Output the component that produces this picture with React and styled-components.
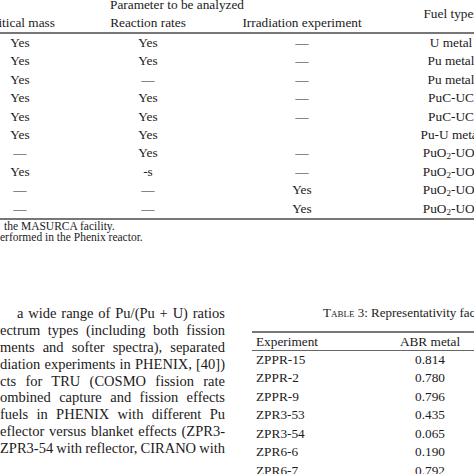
import React from 'react';
import styled, { createGlobalStyle } from 'styled-components';

const GlobalStyle = createGlobalStyle`
  html, body {
    margin: 0;
    padding: 0;
    background: #ffffff;
    overflow: hidden;
  }
  body {
    font-family: "Liberation Serif", "DejaVu Serif", serif;
    color: #1c1a1b;
  }
`;

const topCols = '128px 128px 180px 118px';
const rowH = 18.4;

const Page = styled.div`
  width: 474px;
  height: 474px;
  overflow: hidden;
  display: flex;
  flex-direction: column;
`;

const TopTable = styled.div`
  flex-shrink: 0;
  width: max-content;
  margin: -4px 0 0 -44px;
  font-size: 13.3px;
`;

const HeadGrid = styled.div`
  display: grid;
  grid-template-columns: ${topCols};
  grid-template-rows: 18px 18px;
  border-bottom: 2px solid #777;
`;

const HeadCell = styled.div`
  grid-column: ${(p) => p.$col};
  grid-row: ${(p) => p.$row};
  align-self: center;
  line-height: 18px;
  text-align: ${(p) => (p.$left ? 'left' : 'center')};
  padding-left: ${(p) => p.$pad || 0}px;
  white-space: nowrap;
`;

const Body = styled.div`
  border-bottom: 2px solid #777;
`;

const Row = styled.div`
  display: grid;
  grid-template-columns: ${topCols};
  height: ${rowH}px;
  line-height: ${rowH}px;
`;

const Cell = styled.div`
  text-align: center;
  white-space: nowrap;
`;

const Sub = styled.sub`
  font-size: 0.68em;
  line-height: 0;
  vertical-align: -0.25em;
`;

const Notes = styled.div`
  margin-top: 1px;
  font-size: 11.5px;
  line-height: 11.2px;
`;

const NoteLine = styled.div`
  padding-left: ${(p) => p.$pad || 0}px;
  white-space: nowrap;
`;

const Bottom = styled.div`
  display: flex;
  align-items: flex-start;
  margin-top: 62px;
`;

const Paragraph = styled.div`
  flex-shrink: 0;
  width: 225px;
  font-size: 14.5px;
  line-height: 16.8px;
`;

const ParaLine = styled.div`
  padding-left: ${(p) => p.$pad || 0}px;
  text-align: justify;
  text-align-last: justify;
  word-spacing: -2px;
`;

const TableBlock = styled.div`
  flex-shrink: 0;
  margin-left: 27px;
`;

const Caption = styled.div`
  font-size: 13px;
  line-height: 16px;
  padding-left: 71px;
  margin-bottom: 9.5px;
  white-space: nowrap;
`;

const SmallCaps = styled.span`
  font-variant: small-caps;
`;

const RepTable = styled.div`
  width: max-content;
  border-top: 2px solid #777;
  font-size: 13.3px;
`;

const RepRow = styled.div`
  display: grid;
  grid-template-columns: 120px 116px;
  height: ${(p) => (p.$head ? 17 : 18.5)}px;
  line-height: ${(p) => (p.$head ? 17 : 18.5)}px;
  border-bottom: ${(p) => (p.$head ? '1px solid #666' : 'none')};
`;

const RepCell = styled.div`
  text-align: ${(p) => (p.$left ? 'left' : 'center')};
  padding-left: ${(p) => (p.$left ? 4 : 0)}px;
  white-space: nowrap;
`;

const D = '\u2014';
const puo2 = (
  <>
    PuO<Sub>2</Sub>-UO<Sub>2</Sub>
  </>
);

const rows = [
  ['Yes', 'Yes', D, 'U metal'],
  ['Yes', 'Yes', D, 'Pu metal'],
  ['Yes', D, D, 'Pu metal'],
  ['Yes', 'Yes', D, 'PuC-UC'],
  ['Yes', 'Yes', D, 'PuC-UC'],
  ['Yes', 'Yes', '', 'Pu-U metal'],
  [D, 'Yes', D, puo2],
  ['Yes', '-s', D, puo2],
  [D, D, 'Yes', puo2],
  [D, D, 'Yes', puo2],
];

const paragraph = [
  { text: 'a wide range of Pu/(Pu + U) ratios', pad: 17 },
  { text: 'ectrum types (including both fission' },
  { text: 'ments and softer spectra), separated' },
  { text: 'diation experiments in PHENIX, [40])' },
  { text: 'cts for TRU (COSMO fission rate' },
  { text: 'ombined capture and fission effects' },
  { text: 'fuels in PHENIX with different Pu' },
  { text: 'eflector versus blanket effects (ZPR3-' },
  { text: 'ZPR3-54 with reflector, CIRANO with' },
];

const rep = [
  ['ZPPR-15', '0.814'],
  ['ZPPR-2', '0.780'],
  ['ZPPR-9', '0.796'],
  ['ZPR3-53', '0.435'],
  ['ZPR3-54', '0.065'],
  ['ZPR6-6', '0.190'],
  ['ZPR6-7', '0.792'],
];

export default function App() {
  return (
    <>
      <GlobalStyle />
      <Page>
        <TopTable>
          <HeadGrid>
            <HeadCell $col="2 / 4" $row="1" $left $pad={26}>
              Parameter to be analyzed
            </HeadCell>
            <HeadCell $col="1" $row="2">Critical mass</HeadCell>
            <HeadCell $col="2" $row="2">Reaction rates</HeadCell>
            <HeadCell $col="3" $row="2">Irradiation experiment</HeadCell>
            <HeadCell $col="4" $row="1 / 3">Fuel types</HeadCell>
          </HeadGrid>
          <Body>
            {rows.map((r, i) => (
              <Row key={i}>
                <Cell>{r[0]}</Cell>
                <Cell>{r[1]}</Cell>
                <Cell>{r[2]}</Cell>
                <Cell>{r[3]}</Cell>
              </Row>
            ))}
          </Body>
        </TopTable>

        <Notes>
          <NoteLine $pad={4}>the MASURCA facility.</NoteLine>
          <NoteLine>erformed in the Phenix reactor.</NoteLine>
        </Notes>

        <Bottom>
          <Paragraph>
            {paragraph.map((l, i) => (
              <ParaLine key={i} $pad={l.pad}>{l.text}</ParaLine>
            ))}
          </Paragraph>
          <TableBlock>
            <Caption>
              <SmallCaps>Table</SmallCaps> 3: Representativity factors
            </Caption>
            <RepTable>
              <RepRow $head>
                <RepCell $left>Experiment</RepCell>
                <RepCell>ABR metal</RepCell>
              </RepRow>
              {rep.map((r) => (
                <RepRow key={r[0]}>
                  <RepCell $left>{r[0]}</RepCell>
                  <RepCell>{r[1]}</RepCell>
                </RepRow>
              ))}
            </RepTable>
          </TableBlock>
        </Bottom>
      </Page>
    </>
  );
}
